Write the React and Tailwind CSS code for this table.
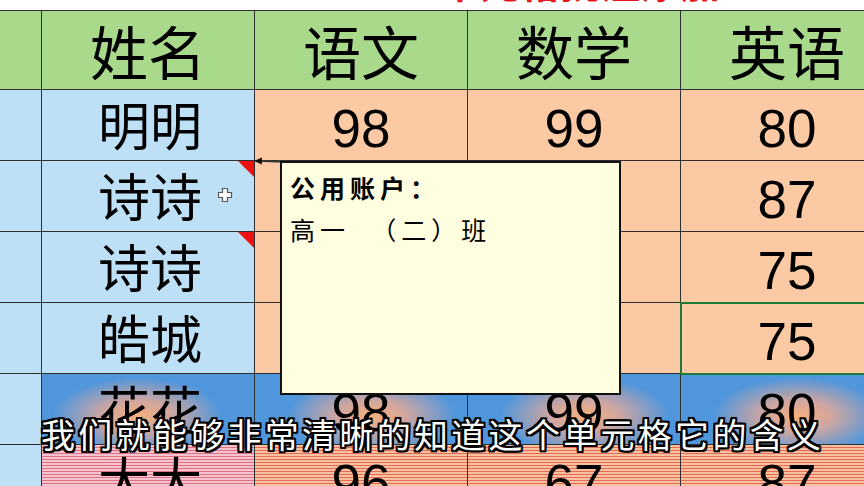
import React from 'react'

const FONT = "font-['Liberation_Sans','Noto_Sans_CJK_SC',sans-serif]"

const rows = [
  { name: '明明', scores: ['98', '99', '80'], kind: 'plain' },
  { name: '诗诗', scores: ['', '', '87'], kind: 'plain' },
  { name: '诗诗', scores: ['', '', '75'], kind: 'plain' },
  { name: '皓城', scores: ['', '', '75'], kind: 'plain' },
  { name: '花花', scores: ['98', '99', '80'], kind: 'glow' },
  { name: '大大', scores: ['96', '67', '87'], kind: 'stripe' },
]

const cell = 'border-r border-b border-[#2f2f2f] flex items-center justify-center'

function nameBg(kind) {
  if (kind === 'glow') return 'bg-[radial-gradient(ellipse_40%_55%_at_45%_60%,#f6b07c_0%,#d0a6a0_40%,#4f96dc_100%)]'
  if (kind === 'stripe') return 'bg-[repeating-linear-gradient(180deg,#f6c3d1_0px,#f6c3d1_2px,#e0707e_2px,#e0707e_3px)]'
  return 'bg-[#bde0f6]'
}

function scoreBg(kind) {
  if (kind === 'glow') return 'bg-[radial-gradient(ellipse_40%_55%_at_55%_60%,#f6b07c_0%,#d0a6a0_40%,#4f96dc_100%)]'
  if (kind === 'stripe') return 'bg-[repeating-linear-gradient(180deg,#f8c2a0_0px,#f8c2a0_2px,#e46a58_2px,#e46a58_3px)]'
  return 'bg-[#fbcaa4]'
}

export default function App() {
  return (
    <div className={`relative w-[864px] h-[486px] overflow-hidden bg-white ${FONT}`}>
      {/* clipped title, only its lower edge shows */}
      <div className="h-[10px] overflow-hidden">
        <div className="ml-[440px] -mt-[38px] text-[40px] leading-[44px] font-bold text-[#e8141c]">
          单元格批注添加
        </div>
      </div>

      {/* sheet */}
      <div className="grid grid-cols-[42px_213px_213px_213px_213px] grid-rows-[79px_71px_71px_71px_71px_71px_71px] border-t border-[#2f2f2f] w-[894px]">
        <div className={`${cell} bg-[#a9d98b]`} />
        {['姓名', '语文', '数学', '英语'].map(h => (
          <div key={h} className={`${cell} bg-[#a9d98b] pt-[8px] text-[58px] text-black`}>{h}</div>
        ))}

        {rows.map((r, i) => (
          <React.Fragment key={i}>
            <div className={`${cell} bg-[#bde0f6]`} />
            <div className={`${cell} ${nameBg(r.kind)} pt-[6px] pl-[4px] text-[52px] text-black`}>{r.name}</div>
            {r.scores.map((s, j) => (
              <div key={j} className={`${cell} ${scoreBg(r.kind)} pt-[8px] text-[53px] text-black`}>{s}</div>
            ))}
          </React.Fragment>
        ))}
      </div>

      {/* selected cell */}
      <div className="absolute left-[680px] top-[302px] w-[200px] h-[73px] border-2 border-[#1d7a33]" />

      {/* comment indicators */}
      <div className="absolute left-[238px] top-[161px] w-0 h-0 border-t-[16px] border-t-[#f01010] border-l-[16px] border-l-transparent" />
      <div className="absolute left-[238px] top-[232px] w-0 h-0 border-t-[16px] border-t-[#f01010] border-l-[16px] border-l-transparent" />

      {/* connector arrow */}
      <svg className="absolute left-[253px] top-[155px]" width="30" height="14" viewBox="0 0 30 14">
        <line x1="6" y1="6" x2="28" y2="7" stroke="#333" strokeWidth="1.5" />
        <polygon points="1,6 9,2.5 9,9.5" fill="#111" />
      </svg>

      {/* cursor */}
      <svg className="absolute left-[217px] top-[187px]" width="16" height="16" viewBox="0 0 16 16">
        <path d="M5.5 1.5h5v4h4v5h-4v4h-5v-4h-4v-5h4z" fill="#fff" stroke="#555" strokeWidth="1.2" />
      </svg>

      {/* comment box */}
      <div className="absolute left-[280px] top-[161px] w-[341px] h-[234px] bg-[#fffee0] border-2 border-[#111] pl-[8px] pt-[5px] font-['Noto_Sans_CJK_SC',sans-serif] text-black">
        <div className="text-[25px] leading-[38px] font-bold tracking-[5px]">公用账户：</div>
        <div className="text-[25px] leading-[38px] tracking-[5px] mt-[4px] whitespace-pre">高一  （二）班</div>
      </div>

      {/* subtitle */}
      <div className="absolute left-[41px] top-[414px] whitespace-nowrap text-[34px] leading-[40px] tracking-[3.3px] text-white font-['Noto_Sans_CJK_SC',sans-serif] [text-shadow:-2px_-2px_0_#000,2px_-2px_0_#000,-2px_2px_0_#000,2px_2px_0_#000,0_2px_0_#000,0_-2px_0_#000,2px_0_0_#000,-2px_0_0_#000]">
        我们就能够非常清晰的知道这个单元格它的含义
      </div>
    </div>
  )
}
